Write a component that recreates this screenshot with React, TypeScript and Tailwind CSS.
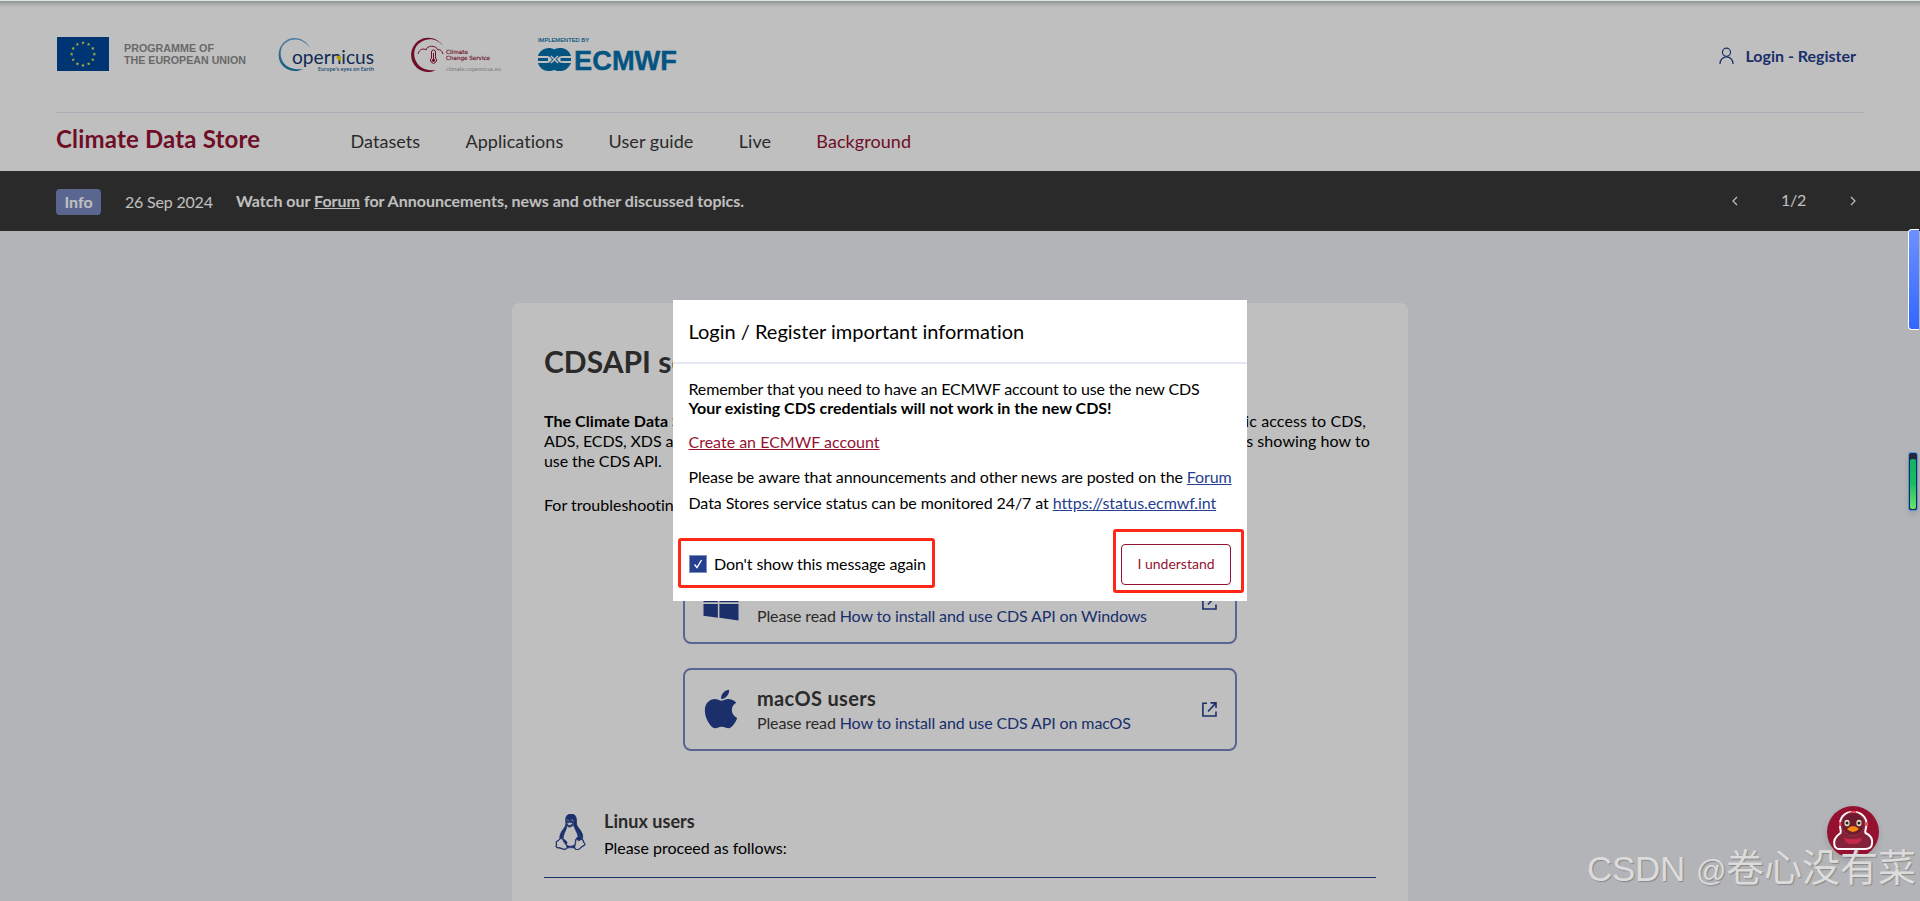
import React from "react";
import { FaApple, FaLinux, FaWindows } from "react-icons/fa";

const navItems = ["Datasets", "Applications", "User guide", "Live", "Background"];

// angles of the twelve stars in the EU flag
const stars = [0, 30, 60, 90, 120, 150, 180, 210, 240, 270, 300, 330];

function EuLogo() {
  return (
    <div className="flex items-center gap-[15px]">
      <svg width="52" height="34" viewBox="0 0 52 34">
        <rect width="52" height="34" fill="#00479a" />
        {stars.map((a) => (
          <path
            key={a}
            d="M0 -1.8 L.5 -.5 L1.8 -.5 L.8 .4 L1.1 1.7 L0 .9 L-1.1 1.7 L-.8 .4 L-1.8 -.5 L-.5 -.5Z"
            fill="#e8e45a"
            transform={`translate(${26 + 11.3 * Math.sin((a * Math.PI) / 180)} ${17 - 11.3 * Math.cos((a * Math.PI) / 180)})`}
          />
        ))}
      </svg>
      <svg className="overflow-visible" width="124" height="34" viewBox="0 0 124 34" fontFamily="Liberation Sans, sans-serif" fontWeight="700" fontSize="11.200" fill="#8d8d8d">
        <text x="0" y="15" textLength="90" lengthAdjust="spacingAndGlyphs">PROGRAMME OF</text>
        <text x="0" y="27" textLength="122" lengthAdjust="spacingAndGlyphs">THE EUROPEAN UNION</text>
      </svg>
    </div>
  );
}

function CopernicusLogo() {
  return (
    <svg className="overflow-visible" width="98" height="40" viewBox="0 0 98 40">
      <defs>
        <linearGradient id="arc" x1="0" y1="0" x2="0" y2="1">
          <stop offset="0" stopColor="#6fa9dc" />
          <stop offset="1" stopColor="#147ba8" />
        </linearGradient>
      </defs>
      <path d="M32 11 C27 1 16 -1 9 3 C-1 9 -2 23 6 30 C12 35 20 35 25 32 C16 33 9 31 5 25 C1 18 2 9 9 5 C17 0 26 3 32 11Z" fill="url(#arc)" />
      <text x="14" y="27" fontFamily="Lato, sans-serif" fontSize="19" fill="#14386f" textLength="82" lengthAdjust="spacingAndGlyphs">opernicus</text>
      <path d="M58 20 q3 -3 5 0 v4 q-3 0 -5 -4z" fill="#f0d20a" />
      <text x="40" y="33.500" fontFamily="Open Sans, sans-serif" fontWeight="600" fontSize="5.600" fill="#1d5b94" textLength="56" lengthAdjust="spacingAndGlyphs">Europe's eyes on Earth</text>
    </svg>
  );
}

function ClimateLogo() {
  return (
    <svg className="overflow-visible" width="92" height="38" viewBox="0 0 92 38">
      <path d="M33 10 C27 0 15 -2 7 4 C-2 11 -2 24 6 31 C12 36 20 36 25 33 C17 34 10 32 6 26 C1 18 3 9 10 5 C18 0 27 2 33 10Z" fill="#941333" />
      <path d="M7 17 C8 12 13 11 15 13 C16 8 25 8 27 13 C29 12 31 14 32 17" fill="none" stroke="#941333" strokeWidth="1" />
      <path d="M20.500 21 v-6 a2 2 0 0 1 4 0 v6 a3 3 0 1 1 -4 0z" fill="none" stroke="#941333" strokeWidth="1" />
      <circle cx="22.500" cy="23.300" r="1.600" fill="#941333" />
      <path d="M22.500 16 v7" stroke="#941333" />
      <g fontFamily="DejaVu Sans, sans-serif" fontSize="5.600">
        <text x="35" y="16.500" fill="#941333" stroke="#941333" strokeWidth=".15" textLength="22" lengthAdjust="spacingAndGlyphs">Climate</text>
        <text x="35" y="23" fill="#941333" stroke="#941333" strokeWidth=".15" textLength="44" lengthAdjust="spacingAndGlyphs">Change Service</text>
        <text x="35" y="34" fontSize="5" fill="#8c8c8c" textLength="55" lengthAdjust="spacingAndGlyphs">climate.copernicus.eu</text>
      </g>
    </svg>
  );
}

function EcmwfLogo() {
  return (
    <svg className="overflow-visible" width="141" height="36" viewBox="0 0 141 36" fill="#0670ac">
      <text x="0" y="5.300" fontFamily="Liberation Sans, sans-serif" fontSize="5.600" stroke="#0670ac" strokeWidth=".15" textLength="51" lengthAdjust="spacingAndGlyphs">IMPLEMENTED BY</text>
      {/* two rings with horizontal bars, crossing in the middle */}
      <path d="M11 11 C13 11 15 11.500 16 12.500 C18 11 21 11 23 11 C28 11 32 15 33 19 H25 C22 19 20.500 20 19 22.500 C20.500 25 22 26 25 26 H33 C31 30 28 34 23 34 C20 34 18 34 16 33 C14 34 12 34 10 34 C5 34 1 30 0 26 H9 C11 26 12.500 25 14 22.500 C12.500 20 11 19 9 19 H0 C1 15 5 11 11 11Z" />
      <path d="M0 22.500 H10 M22.500 22.500 H33" stroke="#0670ac" strokeWidth="3" />
      <path d="M13 19 L20 26 M20 19 L13 26" fill="none" stroke="#fff" strokeWidth="1.500" />
      <text x="36" y="32.500" fontFamily="Liberation Sans, sans-serif" fontWeight="700" fontSize="27.500" stroke="#0670ac" strokeWidth=".4" textLength="103" lengthAdjust="spacingAndGlyphs">ECMWF</text>
    </svg>
  );
}

function ExternalIcon() {
  return (
    <svg width="15" height="15" viewBox="0 0 15 15" fill="none" stroke="#25408f" strokeWidth="1.600">
      <path d="M5 1.200 H.9 V14 H14 V9.500" />
      <path d="M8.500 .9 H14 V6 M14 .9 L6 9.500" />
    </svg>
  );
}

interface SystemCardProps {
  icon: React.ReactNode;
  title: string;
  link: string;
}

function SystemCard({ icon, title, link }: SystemCardProps) {
  return (
    <div className="mx-auto flex h-[83px] w-[554px] items-center rounded-lg border-2 border-[#7889c1] pr-[18px] pl-[18px]">
      <div className="flex w-[36px] justify-center text-[#25408f]">{icon}</div>
      <div className="ml-[18px] flex-1 pt-[2px]">
        <h2 className="text-xl leading-6 font-bold tracking-[0.35px] text-[#393939]">{title}</h2>
        <p className="pt-px text-base leading-6 tracking-[-0.12px] text-[#393939]">
          Please read <a className="text-[#25408f]">{link}</a>
        </p>
      </div>
      <ExternalIcon />
    </div>
  );
}

function Header() {
  return (
    <header className="h-[171px] bg-white px-14">
      <div className="flex h-[113px] items-start border-b border-[#e2e4f2]">
        <div className="flex flex-1 items-start pt-[37px] pl-px">
          <EuLogo />
          <div className="ml-[30px]">
            <CopernicusLogo />
          </div>
          <div className="ml-[35px]">
            <ClimateLogo />
          </div>
          <div className="ml-[35px]">
            <EcmwfLogo />
          </div>
        </div>
        <div className="flex items-center gap-[11px] pt-[46px] pr-[8px] text-base leading-5 font-bold text-[#25408f]">
          <svg width="15" height="18" viewBox="0 0 16 18" fill="none" stroke="#25408f" strokeWidth="1.300">
            <circle cx="8" cy="5" r="4.300" />
            <path d="M1 17.500 C1 7.500 15 7.500 15 17.500" />
          </svg>
          Login - Register
        </div>
      </div>
      <div className="flex pt-[14px]">
        <h1 className="w-[294.500px] text-2xl leading-6 font-bold tracking-[0.17px] text-[#941333]">Climate Data Store</h1>
        <nav className="flex gap-[45.300px] pt-[2px] text-lg leading-6 tracking-[0.06px] text-[#393939]">
          {navItems.map((item) => (
            <a key={item} className={item === "Background" ? "text-[#941333]" : ""}>
              {item}
            </a>
          ))}
        </nav>
      </div>
    </header>
  );
}

function InfoBar() {
  return (
    <div className="flex h-[60px] items-center bg-[#393939] px-14 text-base text-white">
      <span className="mt-[2px] flex h-[26px] w-[45px] items-center justify-center rounded bg-[#7889c1] font-bold">Info</span>
      <span className="mt-[2px] ml-6 w-[111px] tracking-[-0.2px]">26 Sep 2024</span>
      <p className="flex-1 font-bold">
        Watch our <a className="underline">Forum</a> for Announcements, news and other discussed topics.
      </p>
      <div className="flex items-center pr-[8px]">
        <svg width="6" height="10" viewBox="0 0 6 10" fill="none" stroke="#fff" strokeWidth="1.200">
          <path d="M5 1 L1 5 L5 9" />
        </svg>
        <span className="w-[112px] pr-px pb-[2px] text-center tracking-[-0.2px]">1/2</span>
        <svg width="6" height="10" viewBox="0 0 6 10" fill="none" stroke="#fff" strokeWidth="1.200">
          <path d="M1 1 L5 5 L1 9" />
        </svg>
      </div>
    </div>
  );
}

function Setup() {
  return (
    <main className="px-[512px] pt-[72px]">
      <section className="h-[640px] rounded-lg bg-white px-8 pt-10">
        <h1 className="text-[30px] leading-9 font-bold text-[#393939]">CDSAPI setup</h1>
        <div className="pt-8 text-base leading-5 text-black">
          <div className="flex w-[822px] justify-between">
            <b className="tracking-[0.05px]">The Climate Data Store</b>
            <span className="tracking-[0.1px]">programmatic access to CDS,</span>
          </div>
          <div className="flex w-[826px] justify-between">
            <span className="tracking-[-0.1px]">ADS, ECDS, XDS and</span>
            <span className="tracking-[0.08px]">examples showing how to</span>
          </div>
          <p className="tracking-[-0.1px]">use the CDS API.</p>
          <p className="pt-6">For troubleshooting</p>
        </div>
        <div className="flex flex-col gap-6 pt-[46px]">
          <SystemCard icon={<FaWindows size={40} />} title="Windows users" link="How to install and use CDS API on Windows" />
          <SystemCard icon={<FaApple size={44} className="-mt-[2px] shrink-0" />} title="macOS users" link="How to install and use CDS API on macOS" />
        </div>
        <div className="mt-[60px] flex h-[67px] border-b border-[#25408f] pl-[11px]">
          <FaLinux size={36} className="mt-[3px] w-[31px] stroke-[#25408f] stroke-12 text-[#25408f]" preserveAspectRatio="none" />
          <div className="ml-[18px] leading-5">
            <h2 className="text-lg leading-5 font-bold tracking-[0.05px] text-[#393939]">Linux users</h2>
            <p className="pt-[7px] text-base leading-5 tracking-[-0.03px] text-black">Please proceed as follows:</p>
          </div>
        </div>
      </section>
    </main>
  );
}

function LoginDialog() {
  return (
    <div className="absolute top-[300px] left-[673px] flex h-[301px] w-[574px] flex-col bg-white text-base text-black">
      <h2 className="flex h-16 items-center border-b-2 border-[#e5e8f5] px-[15.500px] text-xl">Login / Register important information</h2>
      <div className="px-[15.500px] pt-[15px] leading-[19px]">
        <p className="tracking-[-0.15px]">Remember that you need to have an ECMWF account to use the new CDS</p>
        <p className="font-bold">Your existing CDS credentials will not work in the new CDS!</p>
        <p className="pt-[15px]">
          <a className="text-[#941333] underline">Create an ECMWF account</a>
        </p>
        <div className="pt-[13px] leading-[26px] tracking-[-0.1px] whitespace-nowrap">
          <p>
            Please be aware that announcements and other news are posted on the <a className="text-[#25408f] underline">Forum</a>
          </p>
          <p className="tracking-[-0.09px]">
            Data Stores service status can be monitored 24/7 at <a className="text-[#25408f] underline">https://status.ecmwf.int</a>
          </p>
        </div>
      </div>
      <div className="flex items-center justify-between px-4 pt-7">
        <label className="flex items-center gap-[7px]">
          <span className="-mt-px flex size-[18px] items-center justify-center border border-[#8290bd] bg-[#25408f]">
            <svg width="10" height="10" viewBox="0 0 10 10" fill="none" stroke="#fff" strokeWidth="1.400">
              <path d="M1.500 5.500 L4 8.500 L8.500 1" />
            </svg>
          </span>
          <span className="pb-[2px] tracking-[-0.1px]">Don't show this message again</span>
        </label>
        <button className="h-[41px] w-[110px] rounded border border-[#941333] pb-[2px] text-sm text-[#941333]">I understand</button>
      </div>
      {/* highlight frames */}
      <div className="absolute top-[238px] left-[5px] h-[50px] w-[257px] rounded-[3px] border-3 border-[#ff2818]" />
      <div className="absolute top-[229px] left-[440px] h-[64px] w-[131px] rounded-[3px] border-3 border-[#ff2818]" />
    </div>
  );
}

function DuckButton() {
  return (
    <svg className="absolute top-[806px] left-[1827px] overflow-visible drop-shadow-md" width="52" height="52" viewBox="0 0 52 52">
      <circle cx="26" cy="26" r="26" fill="#96112f" />
      <path d="M26 6 C17 6 12.500 12 13 20 C13 23 14.500 25.500 13.500 27 C9 30 6 34 7.500 39.500 C8.500 43 11 43 14 43 H38 C42 43 44.500 42 45 38 C46 33 43 29 38.500 27 C37.500 25.500 39 23 39.500 19 C40 12 35 6 26 6Z" fill="#84223a" stroke="#fff" strokeWidth="2" />
      <circle cx="26" cy="18" r="11.500" fill="#6d1c30" stroke="#a32a45" />
      <path d="M24 6 h5 M13 16 v4 M39.500 16 v4" stroke="#e8465d" strokeWidth="2" />
      <ellipse cx="20" cy="17" rx="2.600" ry="3.200" fill="#f0e2c0" />
      <ellipse cx="32" cy="17" rx="2.600" ry="3.200" fill="#f0e2c0" />
      <circle cx="20" cy="17" r="1.500" fill="#1d2733" />
      <circle cx="32" cy="17" r="1.500" fill="#1d2733" />
      <path d="M20 23 Q26 17 32 23 Q26 29 20 23Z" fill="#f58a13" />
      <path d="M17 32 Q26 34 35 32 Q34 38 26 38 Q18 38 17 32Z" fill="#c4284b" />
    </svg>
  );
}

export default function App(): React.ReactElement {
  return (
    <div className="relative h-[901px] w-[1920px] overflow-hidden bg-[#eff0f5] font-[Lato,sans-serif] [font-variant-ligatures:none]">
      <Header />
      <InfoBar />
      <Setup />

      <div className="absolute inset-0 bg-black/25" />
      <div className="absolute inset-x-0 top-0 h-[7px] border-t border-[#dfe6e1] bg-linear-to-b from-[#8f9893] to-[#bfbfbf]" />
      <LoginDialog />

      {/* side widgets */}
      <div className="absolute top-[229px] right-[1px] h-[101px] w-[11px] rounded-l border border-r-0 border-white bg-linear-to-b from-[#6c90ff] to-[#3166ff]" />
      <div className="absolute top-[452px] left-[1908px] h-[59px] w-[10px] rounded-[3px] border border-[#4a9bf0] bg-[#262638] p-px shadow-md">
        <div className="mt-[5px] h-[50px] rounded-[2px] bg-linear-to-b from-[#12b163] via-[#18bd62] to-[#67e46d]" />
      </div>
      <DuckButton />
      <div className="absolute top-[841px] left-[1587px] flex items-baseline leading-[48px] whitespace-nowrap text-[#dcdcdc] text-shadow-[1px_1px_1px_#888]">
        <span className="w-[109px] font-['Liberation_Sans',sans-serif] text-[35px] tracking-[-0.3px]">CSDN</span>
        <span className="w-[30px] font-['Liberation_Sans',sans-serif] text-[30px]">@</span>
        <span className="font-['Noto_Sans_CJK_SC',sans-serif] text-[38px]">卷心没有菜</span>
      </div>
    </div>
  );
}
